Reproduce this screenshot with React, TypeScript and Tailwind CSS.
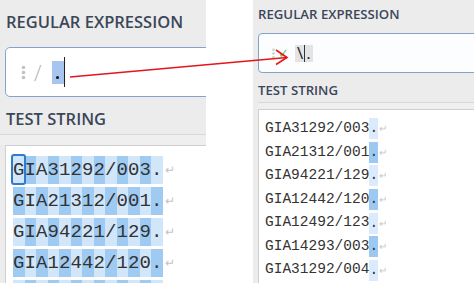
const leftLines = ["GIA31292/003.", "GIA21312/001.", "GIA94221/129.", "GIA12442/120.", "GIA12492/123."];
const rightLines = [
  "GIA31292/003.",
  "GIA21312/001.",
  "GIA94221/129.",
  "GIA12442/120.",
  "GIA12492/123.",
  "GIA14293/003.",
  "GIA31292/004.",
];

const sans = { fontFamily: '"Open Sans", "Noto Sans", sans-serif' };
const mono = { fontFamily: '"Liberation Mono", "DejaVu Sans Mono", monospace' };

function DragDots({ className }: { className: string }) {
  return (
    <svg width="5" height="15" viewBox="0 0 5 15" className={className}>
      <circle cx="2.5" cy="2.5" r="1.8" fill="currentColor" />
      <circle cx="2.5" cy="7.5" r="1.8" fill="currentColor" />
      <circle cx="2.5" cy="12.5" r="1.8" fill="currentColor" />
    </svg>
  );
}

function LeftPanel() {
  return (
    <div className="w-[206px] h-full shrink-0 overflow-hidden bg-[#ececec] flex flex-col">
      <div
        className="h-[44px] shrink-0 pl-[6px] flex items-center text-[16.5px] font-semibold text-[#3b4758] whitespace-nowrap"
        style={sans}
      >
        REGULAR EXPRESSION
      </div>
      <div className="pl-[5px] mt-[3px] shrink-0">
        <div className="h-[50px] w-[260px] border-[1.5px] border-[#86a2c8] rounded-[5px] bg-white flex items-center pl-[15px]">
          <DragDots className="text-[#c2c2c2]" />
          <span className="ml-[8px] text-[22px] font-light text-[#b4b4b4] leading-none" style={sans}>
            /
          </span>
          <span className="ml-[10px] w-[12px] h-[23px] bg-[#a8c4f0] relative">
            <span className="absolute left-[4px] top-[15px] w-[3px] h-[3px] rounded-full bg-[#111]" />
          </span>
          <span className="w-[1.5px] h-[30px] bg-[#222]" />
        </div>
      </div>
      <div
        className="h-[38px] shrink-0 pl-[6px] pt-[8px] flex items-center text-[16.5px] font-semibold text-[#3b4758] whitespace-nowrap border-b border-[#d6d6d6]"
        style={sans}
      >
        TEST STRING
      </div>
      <div className="h-[10px] shrink-0 bg-[#efefef]" />
      <div className="ml-[5px] w-[260px] flex-1 shrink-0 bg-white border-l border-t border-[#d0d0d0] pl-[7px] pt-[8px]">
        {leftLines.map((line, row) => (
          <div key={row} className="h-[31px] flex items-center relative">
            {line.split("").map((ch, i) => {
              const idx = row * 13 + i;
              return (
                <span
                  key={i}
                  className={`inline-block h-[28px] w-[11.5px] text-center leading-[28px] text-[19px] text-[#333] ${
                    idx % 2 === 0 ? "bg-[#d2e6fa]" : "bg-[#9fcbf3]"
                  }`}
                  style={mono}
                >
                  {ch}
                </span>
              );
            })}
            <span className="ml-[2px] text-[12px] text-[#c4c4c4]" style={sans}>
              ↵
            </span>
            {row === 0 && (
              <span className="absolute left-[-2px] top-[0px] w-[15px] h-[31px] border-2 border-[#2f7bd0] rounded-[3px]" />
            )}
          </div>
        ))}
      </div>
    </div>
  );
}

function RightPanel() {
  return (
    <div className="flex-1 h-full overflow-hidden bg-[#ececec] flex flex-col pl-[5px]">
      <div
        className="h-[30px] shrink-0 flex items-center text-[13.2px] font-semibold text-[#3b4758] whitespace-nowrap"
        style={sans}
      >
        REGULAR EXPRESSION
      </div>
      <div className="mt-[3px] shrink-0 h-[40px] w-[240px] border-[1.5px] border-[#86a2c8] rounded-[4px] bg-[#fcfdff] flex items-center pl-[12px]">
        <DragDots className="text-[#c9d2c2] scale-75" />
        <span className="ml-[2px] text-[13px] text-[#6fbf73] leading-none" style={sans}>
          ✓
        </span>
        <span className="ml-[6px] h-[17px] px-[2px] bg-[#e4e4e4] flex items-center text-[17px] text-[#222]" style={sans}>
          \
          <span className="w-[1px] h-[17px] bg-[#333] mx-[1px]" />.
        </span>
      </div>
      <div
        className="h-[30px] shrink-0 pt-[6px] flex items-center text-[13.2px] font-semibold text-[#3b4758] whitespace-nowrap border-b border-[#d6d6d6]"
        style={sans}
      >
        TEST STRING
      </div>
      <div className="h-[6px] shrink-0 bg-[#efefef]" />
      <div className="w-[240px] flex-1 shrink-0 bg-white border-l border-t border-[#d0d0d0] pl-[6px] pt-[7px]">
        {rightLines.map((line, row) => (
          <div key={row} className="h-[23.6px] flex items-center text-[14.5px] text-[#333]" style={mono}>
            <span>{line.slice(0, 12)}</span>
            <span
              className={`inline-block h-[21px] leading-[21px] ${row % 2 === 0 ? "bg-[#dbeafc]" : "bg-[#9cc8f2]"}`}
            >
              .
            </span>
            <span className="ml-[1px] text-[10px] text-[#c8c8c8]" style={sans}>
              ↵
            </span>
          </div>
        ))}
      </div>
    </div>
  );
}

export default function App() {
  return (
    <div className="relative w-[474px] h-[283px] overflow-hidden bg-white flex gap-[47px]">
      <LeftPanel />
      <RightPanel />
      <svg className="absolute inset-0 pointer-events-none" width="474" height="283" viewBox="0 0 474 283">
        <line x1="70" y1="77" x2="287" y2="57.5" stroke="#e3161b" strokeWidth="1.6" />
        <polyline points="276,50 287,57.5 276,64.5" fill="none" stroke="#e3161b" strokeWidth="1.6" />
      </svg>
    </div>
  );
}
